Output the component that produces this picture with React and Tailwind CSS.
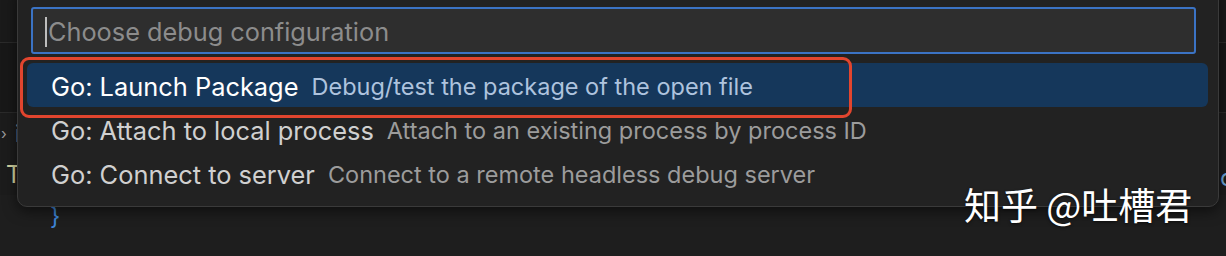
import React from 'react';

const rows = [
  { label: 'Go: Launch Package', detail: 'Debug/test the package of the open file', active: true },
  { label: 'Go: Attach to local process', detail: 'Attach to an existing process by process ID' },
  { label: 'Go: Connect to server', detail: 'Connect to a remote headless debug server' },
];

const App = () => {
  return (
    <div className="relative w-[1226px] h-[256px] overflow-hidden bg-[#1e1e1e] font-['Inter','Noto_Sans_CJK_SC',sans-serif]">
      {/* editor behind the picker */}
      <div className="flex flex-col">
        <div className="h-[43px] bg-[#1a1a1a] border-b border-[#2b2b2b]" />
        <div className="h-[70px] bg-[#181818] border-b border-[#2b2b2b]" />
        <div className="h-[82px] bg-[#1c1c1c] pl-[1px] text-[24px] leading-[41px]">
          <div className="flex items-center gap-[8px] text-[#9a9a9a]">
            <span className="text-[15px]">›</span>
            <span>i</span>
          </div>
          <div className="pl-[5px] text-[#d4d4a0]">T</div>
        </div>
        <div className="pl-[50px] text-[24px] leading-[44px] text-[#3f86d8]">{'}'}</div>
      </div>
      <div className="absolute left-[1220px] top-[160px] text-[24px] text-[#6fa8dc]">c</div>

      {/* quick pick */}
      <div className="absolute left-[17px] top-[-10px] w-[1202px] h-[217px] rounded-b-[10px] border border-[#3a3a3a] bg-[#222222] shadow-[0_4px_14px_rgba(0,0,0,0.55)] pt-[16px]">
        <div className="ml-[13px] mr-[22px] h-[47px] rounded-[3px] border-2 border-[#3b73c4] bg-[#2e2e2e] flex items-center pl-[12px] pt-[3px]">
          <span className="w-[2px] h-[30px] bg-[#bdbdbd] mr-[1px]" />
          <span className="text-[25.3px] text-[#8c8c8c]">Choose debug configuration</span>
        </div>
        <div className="mt-[9px] ml-[9px] mr-[10px] flex flex-col">
          {rows.map((r) => (
            <div
              key={r.label}
              className={
                r.active
                  ? 'h-[44px] rounded-[6px] bg-[#15375b] flex items-center pl-[24px] pt-[4px] gap-[13px]'
                  : 'h-[44px] flex items-center pl-[24px] pt-[4px] gap-[13px]'
              }
            >
              <span className={r.active ? 'text-[25.4px] text-white' : 'text-[25.4px] text-[#d0d0d0]'}>{r.label}</span>
              <span className={r.active ? 'text-[23.5px] text-[#aec3de]' : 'text-[23.5px] text-[#9c9c9c]'}>{r.detail}</span>
            </div>
          ))}
        </div>
      </div>

      {/* highlight box */}
      <div className="absolute left-[20px] top-[57px] w-[832px] h-[61px] rounded-[9px] border-[3px] border-[#e2452e]" />

      {/* watermark */}
      <div className="absolute left-[964px] top-[186px] text-[37px] leading-none text-white font-['Noto_Sans_CJK_SC',sans-serif] [text-shadow:0_1px_3px_rgba(0,0,0,0.6)]">
        知乎 @吐槽君
      </div>
    </div>
  );
};

export default App;
